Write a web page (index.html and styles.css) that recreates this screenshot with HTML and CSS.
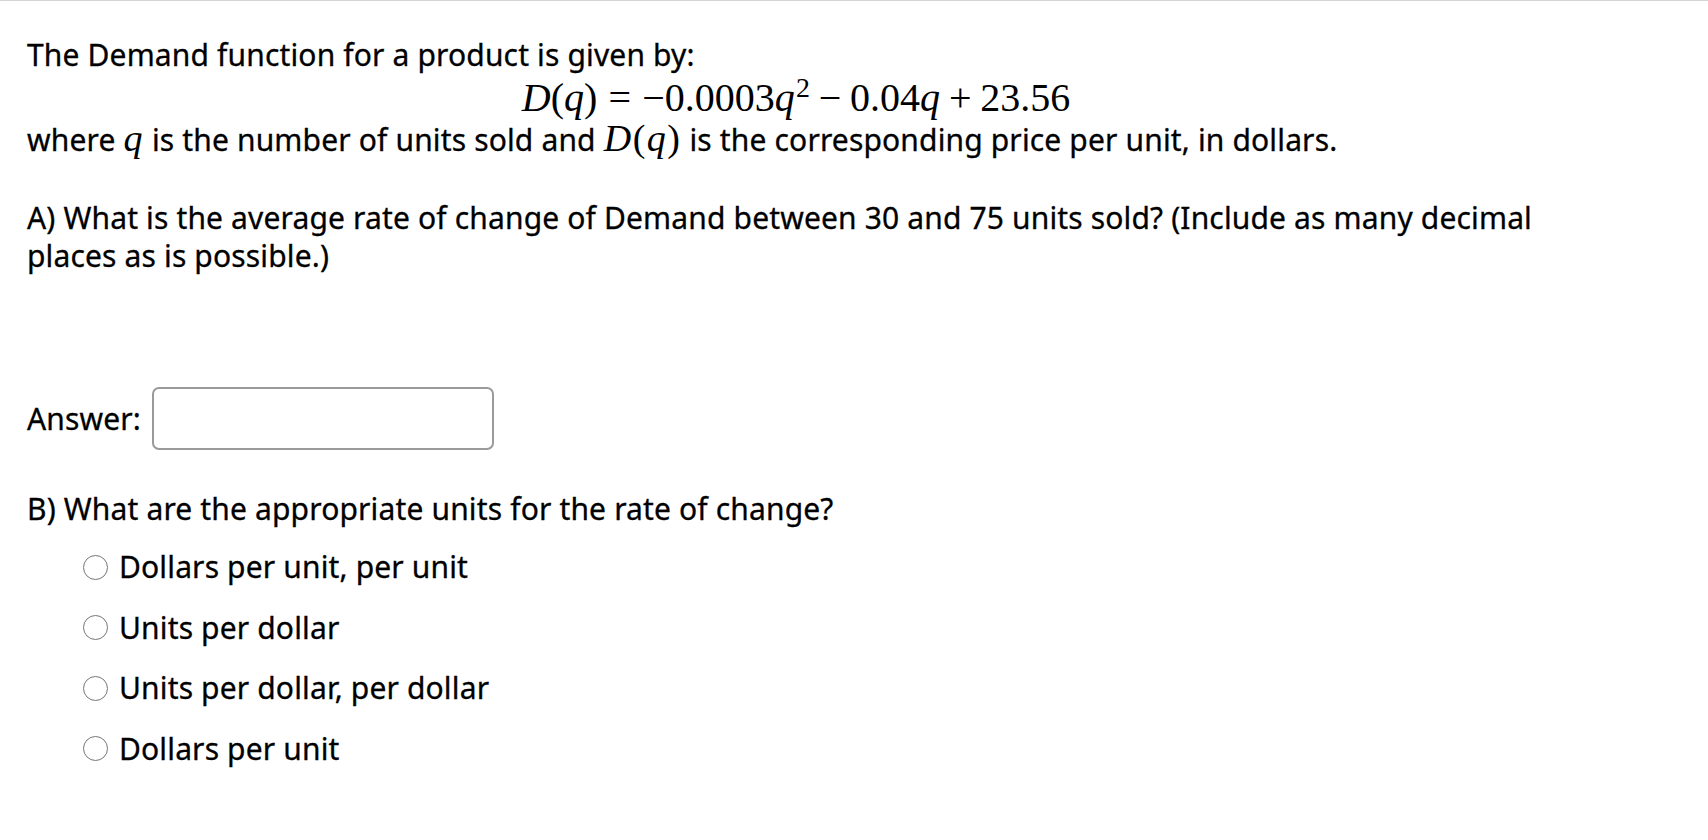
FILE: index.html
```html
<!DOCTYPE html>
<html lang="en">
<head>
<meta charset="utf-8">
<title>Demand function question</title>
<link rel="stylesheet" href="styles.css">
</head>
<body>
<div class="page">
  <div class="question">
    <p class="text">The Demand function for a product is given by:</p>
    <div class="display-math"><span class="mi">D</span><span class="mo">(</span><span class="mi">q</span><span class="mo">)</span><span class="rel">=</span><span class="mo">&minus;</span>0.0003<span class="mi">q</span><sup class="sup">2</sup><span class="bin">&minus;</span>0.04<span class="mi">q</span><span class="bin">+</span>23.56</div>
    <p class="text">where <span class="math"><span class="mi">q</span></span> is the number of units sold and <span class="math"><span class="mi">D</span>(<span class="mi">q</span>)</span> is the corresponding price per unit, in dollars.</p>

    <p class="text part-a">A) What is the average rate of change of Demand between 30 and 75 units sold? (Include as many decimal places as is possible.)</p>

    <div class="answer-row">
      <label class="text" for="answer">Answer:</label>
      <input class="answer-input" id="answer" type="text">
    </div>

    <p class="text part-b">B) What are the appropriate units for the rate of change?</p>
    <ul class="options">
      <li class="option"><input class="radio" type="radio" name="units" id="o1"><label class="text" for="o1">Dollars per unit, per unit</label></li>
      <li class="option"><input class="radio" type="radio" name="units" id="o2"><label class="text" for="o2">Units per dollar</label></li>
      <li class="option"><input class="radio" type="radio" name="units" id="o3"><label class="text" for="o3">Units per dollar, per dollar</label></li>
      <li class="option"><input class="radio" type="radio" name="units" id="o4"><label class="text" for="o4">Dollars per unit</label></li>
    </ul>
  </div>
</div>
</body>
</html>
```

FILE: styles.css
```css
html, body {
  margin: 0;
  padding: 0;
  background: #ffffff;
}

body {
  font-family: "Noto Sans", "Open Sans", sans-serif;
  color: #000000;
}

.page {
  border-top: 1px solid #d4d4d4;
  min-height: 839px;
}

.question {
  width: 1538px;
  padding: 35px 0 0 27px;
}

.text {
  font-size: 30px;
  letter-spacing: 0.15px;
  line-height: 38px;
  margin: 0;
  -webkit-text-stroke: 0.3px #000000;
}

.display-math {
  height: 47px;
  line-height: 47px;
  text-align: center;
  font-family: "Liberation Serif", "DejaVu Serif", serif;
  font-size: 40px;
  letter-spacing: 0;
  white-space: nowrap;
}

.mi {
  font-style: italic;
}

.rel {
  margin: 0 0.28em;
}

.bin {
  margin: 0 0.22em;
}

.sup {
  font-size: 0.7em;
  line-height: 0;
  vertical-align: 0.5em;
  margin-left: 0.04em;
}

.math {
  font-family: "Liberation Serif", "DejaVu Serif", serif;
  font-size: 38px;
  letter-spacing: 0.04em;
  line-height: 0;
  -webkit-text-stroke: 0;
}

.part-a {
  margin-top: 40px;
}

.answer-row {
  display: flex;
  align-items: center;
  gap: 11px;
  margin-top: 112px;
}

.answer-input {
  box-sizing: border-box;
  width: 342px;
  height: 63px;
  margin: 0;
  border: 2px solid #9a9a9a;
  border-radius: 7px;
  background: #ffffff;
  font-size: 29px;
  padding: 0 10px;
  outline: none;
}

.part-b {
  margin-top: 40px;
}

.options {
  list-style: none;
  margin: 9px 0 0;
  padding: 0 0 0 56px;
}

.option {
  display: flex;
  align-items: center;
  gap: 11px;
  height: 60.5px;
}

.radio {
  appearance: none;
  -webkit-appearance: none;
  box-sizing: border-box;
  width: 25px;
  height: 25px;
  margin: 0;
  border: 1.5px solid #767676;
  border-radius: 50%;
  background: #ffffff;
}
```
